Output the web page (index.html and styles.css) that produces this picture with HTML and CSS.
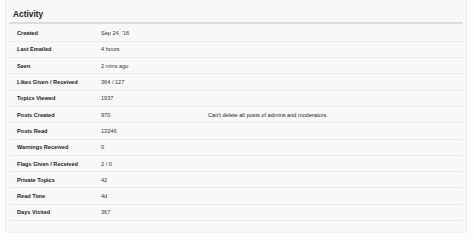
FILE: index.html
```html
<!DOCTYPE html>
<html lang="en">
<head>
  <meta charset="UTF-8" />
  <title>Activity</title>
  <link rel="stylesheet" href="styles.css">
</head>
<body>
  <!-- activity panel -->
  <div class="panel">
    <h2 class="panel-title">Activity</h2>
    <table class="stats">
      <tr><th>Created</th><td>Sep 24, '16</td><td></td></tr>
      <tr><th>Last Emailed</th><td>4 hours</td><td></td></tr>
      <tr><th>Seen</th><td>2 mins ago</td><td></td></tr>
      <tr><th>Likes Given / Received</th><td>364 / 127</td><td></td></tr>
      <tr><th>Topics Viewed</th><td>1937</td><td></td></tr>
      <tr><th>Posts Created</th><td>970</td><td class="note">Can't delete all posts of admins and moderators.</td></tr>
      <tr><th>Posts Read</th><td>13246</td><td></td></tr>
      <tr><th>Warnings Received</th><td>0</td><td></td></tr>
      <tr><th>Flags Given / Received</th><td>2 / 0</td><td></td></tr>
      <tr><th>Private Topics</th><td>42</td><td></td></tr>
      <tr><th>Read Time</th><td>4d</td><td></td></tr>
      <tr><th>Days Visited</th><td>367</td><td></td></tr>
    </table>
  </div>
</body>
</html>
```

FILE: styles.css
```css
/* page */
html, body {
  margin: 0;
  padding: 0;
  background: #fdfdfd;
  font-family: "Liberation Sans", Arial, sans-serif;
  color: #222;
}

body {
  padding: 0 7px 8px 5px;
}

/* panel */
.panel {
  background: #f8f8f8;
  border: 1px solid #efefef;
  border-top: none;
  border-radius: 0 0 3px 3px;
  padding: 0 3px 12px 3px;
  height: 220px;
}

.panel-title {
  margin: 0;
  padding: 8px 0 0 4px;
  height: 14px;
  font-size: 8.4px;
  font-weight: bold;
  line-height: 12px;
  color: #222;
  border-bottom: 2px solid #dcdcdc;
}

/* stats table */
.stats {
  width: 100%;
  margin-top: 1px;
  border-collapse: collapse;
  font-size: 5.6px;
}

.stats tr {
  height: 16.3px;
  border-bottom: 1px solid #ececec;
}

.stats th {
  width: 84px;
  padding: 0 0 0 8px;
  text-align: left;
  font-weight: bold;
  color: #222;
}

.stats td {
  padding: 0;
  color: #333;
}

.stats td:nth-child(2) {
  width: 107px;
}

.stats .note {
  color: #222;
}
```
